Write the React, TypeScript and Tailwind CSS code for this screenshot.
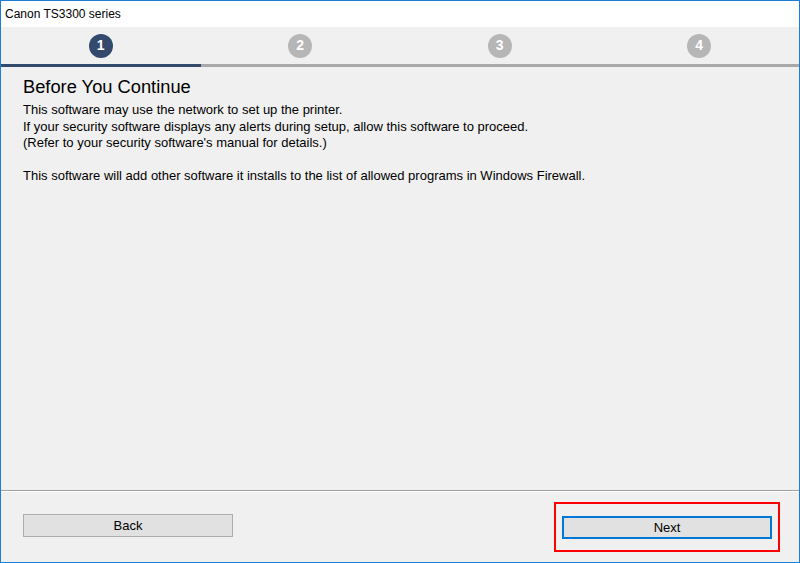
const steps = [1, 2, 3, 4];

function StepDot({ n, active }: { n: number; active: boolean }) {
  return (
    <div className="flex items-center justify-center">
      <div
        className={
          "flex h-[24px] w-[24px] items-center justify-center rounded-full text-[14px] font-bold text-white " +
          (active ? "bg-[#344a6d]" : "bg-[#b6b6b6]")
        }
      >
        {n}
      </div>
    </div>
  );
}

export default function App() {
  return (
    <div
      className="flex h-[563px] w-[800px] flex-col border border-[#1a7fd6] bg-[#f0f0f0] text-black"
      style={{ fontFamily: '"Liberation Sans", Arial, sans-serif' }}
    >
      {/* title bar */}
      <div className="flex h-[26px] items-center bg-white pl-[4px] text-[12px]">
        Canon TS3300 series
      </div>

      {/* steps */}
      <div className="grid h-[37px] grid-cols-4 items-center">
        {steps.map((n) => (
          <StepDot key={n} n={n} active={n === 1} />
        ))}
      </div>
      <div className="flex h-[3px]">
        <div className="w-[200px] bg-[#344a6d]" />
        <div className="flex-1 bg-[#a9a9a9]" />
      </div>

      {/* content */}
      <div className="px-[22px]">
        <h1 className="mt-[9px] text-[18.3px] leading-[21px]">Before You Continue</h1>
        <div className="mt-[5px] text-[13px] leading-[16.5px]">
          <p>This software may use the network to set up the printer.</p>
          <p>If your security software displays any alerts during setup, allow this software to proceed.</p>
          <p>(Refer to your security software's manual for details.)</p>
          <p className="mt-[16.5px]">
            This software will add other software it installs to the list of allowed programs in Windows Firewall.
          </p>
        </div>
      </div>

      <div className="flex-1" />

      {/* footer */}
      <div className="h-px bg-[#a0a0a0]" />
      <div className="h-px bg-white" />
      <div className="flex h-[70px] items-start justify-between pl-[22px] pr-[19px]">
        <button className="mt-[22px] h-[23px] w-[210px] border border-[#adadad] bg-[#e1e1e1] text-[13px]">
          Back
        </button>
        <div className="mt-[10px] border-2 border-[#ff0000] px-[6px] pt-[11px] pb-[11px]">
          <button className="h-[23px] w-[210px] border-2 border-[#0078d7] bg-[#e1e1e1] text-[13px]">
            Next
          </button>
        </div>
      </div>
    </div>
  );
}
